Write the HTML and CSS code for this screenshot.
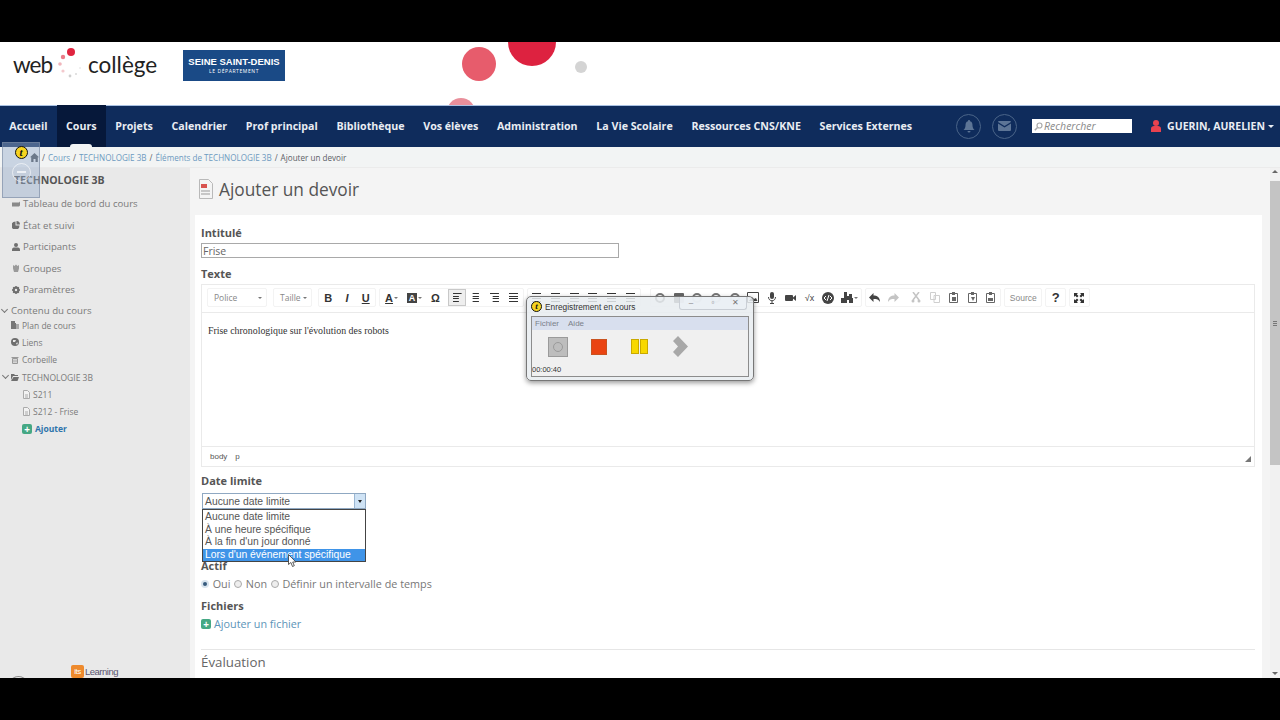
FILE: index.html
```html
<!DOCTYPE html>
<html lang="fr">

<head>
    <meta charset="UTF-8">
    <title>Ajouter un devoir</title>
    <link rel="stylesheet" href="styles.css">
</head>

<body>
    <div class="letterbox"></div>
    <div class="screen">
        <!-- en-tete -->
        <header class="site-header">
            <div class="logo">
                <span class="logo-web">web</span>
                <svg class="logo-dots" width="30" height="34" viewBox="0 0 30 34">
                    <circle cx="16" cy="5" r="4" fill="#e0243f"/>
                    <circle cx="8" cy="10" r="2.2" fill="#ea7b88"/>
                    <circle cx="5" cy="17" r="1.8" fill="#f0b5bb"/>
                    <circle cx="8" cy="24" r="1.6" fill="#f3c9cd"/>
                    <circle cx="15" cy="29" r="1.4" fill="#cfcfcf"/>
                    <circle cx="21" cy="27" r="1" fill="#d8d8d8"/>
                    <circle cx="25" cy="21" r="0.8" fill="#dddddd"/>
                </svg>
                <span>collège</span>
            </div>
            <div class="dept-logo">
                <span class="dept-name">SEINE SAINT-DENIS</span>
                <span class="dept-sub">LE DÉPARTEMENT</span>
            </div>
            <i class="blob blob-a"></i>
            <i class="blob blob-b"></i>
            <i class="blob blob-c"></i>
            <i class="blob blob-d"></i>
        </header>

        <nav class="main-nav">
            <a class="nav-link" href="#">Accueil</a>
            <a class="nav-link active" href="#">Cours</a>
            <a class="nav-link" href="#">Projets</a>
            <a class="nav-link" href="#">Calendrier</a>
            <a class="nav-link" href="#">Prof principal</a>
            <a class="nav-link" href="#">Bibliothèque</a>
            <a class="nav-link" href="#">Vos élèves</a>
            <a class="nav-link" href="#">Administration</a>
            <a class="nav-link" href="#">La Vie Scolaire</a>
            <a class="nav-link" href="#">Ressources CNS/KNE</a>
            <a class="nav-link" href="#">Services Externes</a>
            <div class="nav-right">
                <span class="round-btn">
                    <svg width="12" height="13" viewBox="0 0 12 13"><path fill="#5d7596" d="M6 0a1 1 0 0 1 1 1.2C9 1.7 9.5 3.5 9.5 5.5c0 2.5 1 3.5 2 4.5H.5c1-1 2-2 2-4.5 0-2 .5-3.800 2.500-4.300A1 1 0 0 1 6 0zM4.500 11h3a1.500 1.500 0 0 1-3 0z"/></svg>
                </span>
                <span class="round-btn">
                    <svg width="13" height="10" viewBox="0 0 13 10"><path fill="#5d7596" d="M1 0h11a1 1 0 0 1 1 1L6.500 5 0 1a1 1 0 0 1 1-1zM0 2.500l6.500 4 6.500-4V9a1 1 0 0 1-1 1H1a1 1 0 0 1-1-1z"/></svg>
                </span>
                <div class="search-box">
                    <svg width="9" height="9" viewBox="0 0 9 9"><circle cx="5.500" cy="3.500" r="2.500" fill="none" stroke="#aaa" stroke-width="1.200"/><path d="M3.500 5.500L.8 8.200" stroke="#aaa" stroke-width="1.500"/></svg>
                    <span>Rechercher</span>
                </div>
                <div class="user-menu">
                    <svg width="10" height="12" viewBox="0 0 10 12"><circle cx="5" cy="3" r="3" fill="#e8424f"/><path fill="#e8424f" d="M0 12V8.500C0 7 1.500 6 3 6h4c1.500 0 3 1 3 2.500V12z"/></svg>
                    <span>GUERIN, AURELIEN</span>
                    <i class="caret"></i>
                </div>
            </div>
        </nav>

        <div class="breadcrumb">
            <svg class="home-icon" width="9" height="9" viewBox="0 0 9 9"><path fill="#4a4f55" d="M4.500 0L9 4.300H7.800V9H5.500V6h-2v3H1.200V4.300H0z"/></svg>
            <span class="sep">/</span><a href="#">Cours</a>
            <span class="sep">/</span><a href="#">TECHNOLOGIE 3B</a>
            <span class="sep">/</span><a href="#">Éléments de TECHNOLOGIE 3B</a>
            <span class="sep">/</span><span>Ajouter un devoir</span>
        </div>

        <div class="page">
            <!-- colonne de gauche -->
            <aside class="sidebar">
                <div class="course-title">TECHNOLOGIE 3B</div>
                <ul class="side-main">
                    <li><svg width="8" height="8" viewBox="0 0 8 8"><path fill="#8a8a8a" d="M0 2.500h7l1-1v4l-1 1H0z"/></svg>Tableau de bord du cours</li>
                    <li><svg width="8" height="8" viewBox="0 0 8 8"><path fill="#6f6f6f" d="M3.500.5v4h4a4 4 0 1 1-4-4zM4.500 0A3.500 3.500 0 0 1 8 3.500H4.500z"/></svg>État et suivi</li>
                    <li><svg width="8" height="8" viewBox="0 0 8 8"><circle cx="4" cy="2" r="2" fill="#6f6f6f"/><path fill="#6f6f6f" d="M0 8V6.500C0 5 1.500 4.500 2.500 4.500h3C6.500 4.500 8 5 8 6.500V8z"/></svg>Participants</li>
                    <li><svg width="8" height="8" viewBox="0 0 8 8"><path fill="#9a9a9a" d="M1 1l1.500 1L4 .5 5.500 2 7 1v3.500L6 8H2L1 4.500z"/></svg>Groupes</li>
                    <li><svg width="8" height="8" viewBox="0 0 8 8"><circle cx="4" cy="4" r="2.500" fill="none" stroke="#6f6f6f" stroke-width="1.800"/><path stroke="#6f6f6f" stroke-width="1.400" d="M4 0v8M0 4h8M1.200 1.200l5.600 5.600M6.800 1.200L1.200 6.800"/><circle cx="4" cy="4" r="1.200" fill="#e9e9e9"/></svg>Paramètres</li>
                </ul>
                <div class="side-heading"><i class="chev"></i>Contenu du cours</div>
                <ul class="side-tree">
                    <li><svg width="8" height="8" viewBox="0 0 8 8"><path fill="#777" d="M0 0h4v2h1v6H0z"/><path fill="#aaa" d="M5 3h3v5H5z"/></svg>Plan de cours</li>
                    <li><svg width="8" height="8" viewBox="0 0 8 8"><circle cx="4" cy="4" r="4" fill="#6f6f6f"/><path fill="#e9e9e9" d="M2 2h3L4 4H2zM5 5l2-.5L6 7z"/></svg>Liens</li>
                    <li><svg width="8" height="8" viewBox="0 0 8 8"><path fill="none" stroke="#999" d="M1.500 2.500h5v5h-5zM.5 1.500h7M3 3.500v3M5 3.500v3"/></svg>Corbeille</li>
                    <li class="folder"><i class="chev"></i><svg width="8" height="7" viewBox="0 0 8 7"><path fill="#6f6f6f" d="M0 0h3l1 1h3v1H2L0 6zM2.500 3H8L6.500 7H0z"/></svg>TECHNOLOGIE 3B</li>
                    <li class="nested"><svg width="7" height="9" viewBox="0 0 7 9"><path fill="#f2f2f2" stroke="#aaa" d="M.5.500h4l2 2v6h-6z"/><path stroke="#aaa" d="M2 5h3M2 7h3"/></svg>S211</li>
                    <li class="nested"><svg width="7" height="9" viewBox="0 0 7 9"><path fill="#f2f2f2" stroke="#aaa" d="M.5.500h4l2 2v6h-6z"/><path stroke="#aaa" d="M2 5h3M2 7h3"/></svg>S212 - Frise</li>
                    <li class="nested add"><i class="plus-ico">+</i>Ajouter</li>
                </ul>
                <div class="brand"><span class="brand-mark">its</span><span>Learning</span></div>
                <i class="side-arc"></i>
            </aside>

            <main class="content">
                <div class="page-title">
                    <svg width="16" height="20" viewBox="0 0 16 20"><path fill="#f4f4f4" stroke="#b9b9b9" d="M1.500.5h9l4 4v15h-13z"/><path fill="#d8534f" d="M3 5h6v4H3z"/><path stroke="#999" d="M3 12h9M3 15h9"/></svg>
                    <h1>Ajouter un devoir</h1>
                </div>
                <form class="card">
                    <label class="field-label">Intitulé</label>
                    <input class="text-input" type="text" value="Frise">

                    <label class="field-label label-texte">Texte</label>
                    <div class="editor">
                        <div class="toolbar">
                            <div class="tb-group tb-combo combo-police">Police<i class="mini-caret"></i></div>
                            <div class="tb-group tb-combo combo-taille">Taille<i class="mini-caret"></i></div>
                            <div class="tb-group">
                                <span class="tb-btn"><b>B</b></span>
                                <span class="tb-btn"><b><em>I</em></b></span>
                                <span class="tb-btn"><b class="under">U</b></span>
                            </div>
                            <div class="tb-group">
                                <span class="tb-btn wide"><b class="under">A</b><i class="mini-caret"></i></span>
                                <span class="tb-btn wide"><b class="inverse">A</b><i class="mini-caret"></i></span>
                                <span class="tb-btn"><b>Ω</b></span>
                                <span class="tb-btn on"><i class="lines left"></i></span>
                                <span class="tb-btn"><i class="lines center"></i></span>
                                <span class="tb-btn"><i class="lines right"></i></span>
                                <span class="tb-btn"><i class="lines"></i></span>
                            </div>
                            <div class="tb-group">
                                <span class="tb-btn"><i class="lines"></i></span>
                                <span class="tb-btn"><i class="lines"></i></span>
                                <span class="tb-btn"><i class="lines"></i></span>
                                <span class="tb-btn"><i class="lines"></i></span>
                                <span class="tb-btn"><i class="lines"></i></span>
                                <span class="tb-btn"><i class="lines"></i></span>
                            </div>
                            <div class="tb-group group-media">
                                <span class="tb-btn"><i class="blk round"></i></span>
                                <span class="tb-btn"><i class="blk"></i></span>
                                <span class="tb-btn"><i class="blk round"></i></span>
                                <span class="tb-btn"><i class="blk round"></i></span>
                                <span class="tb-btn"><i class="blk round"></i></span>
                                <span class="tb-btn"><svg width="12" height="11" viewBox="0 0 12 11"><path fill="none" stroke="#444" d="M.5.500h11v10H.5z"/><path fill="#444" d="M2 9l3-4 2 2 2-1 1.500 3z"/></svg></span>
                                <span class="tb-btn"><svg width="8" height="12" viewBox="0 0 8 12"><rect x="2" width="4" height="7" rx="2" fill="#444"/><path fill="none" stroke="#444" d="M.5 5c0 5 7 5 7 0M4 9v3M2 11.500h4"/></svg></span>
                                <span class="tb-btn"><svg width="11" height="8" viewBox="0 0 11 8"><rect y="1" width="8" height="6" rx="1" fill="#444"/><path fill="#444" d="M8 3.500L11 1v6L8 4.500z"/></svg></span>
                                <span class="tb-btn sqrt">√x</span>
                                <span class="tb-btn"><svg width="12" height="12" viewBox="0 0 12 12"><circle cx="6" cy="6" r="6" fill="#444"/><path fill="none" stroke="#fff" d="M4 4L2 6l2 2M8 4l2 2-2 2M7 3L5 9"/></svg></span>
                                <span class="tb-btn wide"><svg width="12" height="11" viewBox="0 0 12 11"><path fill="#444" d="M3 0h3v4h2V2h3v4h1v5H8V8H6v3H0V6h3z"/></svg><i class="mini-caret"></i></span>
                            </div>
                            <div class="tb-group">
                                <span class="tb-btn"><svg width="11" height="9" viewBox="0 0 11 9"><path fill="#444" d="M4.500 0v2.500C8 2.500 11 4 11 9 9.500 6.500 8 6 4.500 6v3L0 4.500z"/></svg></span>
                                <span class="tb-btn"><svg width="11" height="9" viewBox="0 0 11 9"><path fill="#c4c4c4" d="M6.500 0v2.500C3 2.500 0 4 0 9c1.500-2.500 3-3 6.500-3v3L11 4.500z"/></svg></span>
                                <span class="tb-btn after-gap"><svg width="10" height="11" viewBox="0 0 10 11"><path fill="none" stroke="#c4c4c4" stroke-width="1.500" d="M2 0l6 8M8 0L2 8"/><circle cx="2" cy="9" r="1.500" fill="#c4c4c4"/><circle cx="8" cy="9" r="1.500" fill="#c4c4c4"/></svg></span>
                                <span class="tb-btn"><svg width="10" height="11" viewBox="0 0 10 11"><path fill="#fff" stroke="#cfcfcf" d="M.5.500h5v7h-5zM4 3.500h5.500v7H4z"/></svg></span>
                                <span class="tb-btn"><svg width="9" height="11" viewBox="0 0 9 11"><path fill="#fff" stroke="#666" d="M.5 1.500h8v9h-8z"/><path fill="#666" d="M3 0h3v3H3zM3 5h4v4H3z"/></svg></span>
                                <span class="tb-btn"><svg width="9" height="11" viewBox="0 0 9 11"><path fill="#fff" stroke="#666" d="M.5 1.500h8v9h-8z"/><path fill="#666" d="M3 0h3v3H3zM3 5h4l-2 4z"/></svg></span>
                                <span class="tb-btn"><svg width="9" height="11" viewBox="0 0 9 11"><path fill="#fff" stroke="#666" d="M.5 1.500h8v9h-8z"/><path fill="#666" d="M3 0h3v3H3zM2 6h5v3H2z"/></svg></span>
                            </div>
                            <div class="tb-group tb-source">Source</div>
                            <div class="tb-group"><span class="tb-btn"><b class="qmark">?</b></span></div>
                            <div class="tb-group"><span class="tb-btn"><svg width="10" height="10" viewBox="0 0 10 10"><path fill="#333" d="M0 0h4L2.800 1.200 4.500 3 3 4.500 1.200 2.800 0 4zM10 0v4L8.800 2.800 7 4.500 5.500 3l1.700-1.800L6 0zM0 10V6l1.200 1.200L3 5.500 4.500 7 2.800 8.800 4 10zM10 10H6l1.200-1.200L5.500 7 7 5.500l1.800 1.700L10 6z"/></svg></span></div>
                        </div>
                        <div class="editor-body">Frise chronologique sur l'évolution des robots</div>
                        <div class="editor-foot">
                            <span>body</span><span>p</span>
                            <i class="resize"></i>
                        </div>
                    </div>

                    <label class="field-label label-date">Date limite</label>
                    <div class="fake-select">
                        <span>Aucune date limite</span>
                        <i class="select-arrow"></i>
                        <ul class="select-list">
                            <li>Aucune date limite</li>
                            <li>À une heure spécifique</li>
                            <li>À la fin d'un jour donné</li>
                            <li class="selected">Lors d'un événement spécifique</li>
                        </ul>
                        <svg class="mouse" width="9" height="13" viewBox="0 0 9 13"><path fill="#fff" stroke="#333" stroke-width=".8" d="M.5.500v10l2.400-2 1.600 4 1.800-.8-1.600-3.700h3.200z"/></svg>
                    </div>

                    <label class="field-label label-actif">Actif</label>
                    <div class="radios">
                        <i class="radio checked"></i><span>Oui</span>
                        <i class="radio"></i><span>Non</span>
                        <i class="radio"></i><span>Définir un intervalle de temps</span>
                    </div>

                    <label class="field-label label-files">Fichiers</label>
                    <a class="add-file" href="#"><i class="plus-ico">+</i>Ajouter un fichier</a>

                    <h2 class="section-title">Évaluation</h2>
                </form>
            </main>

            <div class="scrollbar">
                <i class="arrow-up"></i>
                <div class="thumb"></div>
                <i class="arrow-down"></i>
            </div>
        </div>

        <!-- fenetre de l'enregistreur, par dessus la page -->
        <div class="recorder">
            <div class="rec-title">
                <span class="t-badge">t</span>
                <span>Enregistrement en cours</span>
                <div class="rec-controls"><i>–</i><i>▫</i><i>✕</i></div>
            </div>
            <div class="rec-inner">
                <div class="rec-menu"><span>Fichier</span><span>Aide</span></div>
                <div class="rec-buttons">
                    <span class="rec-btn rec-dot"><i></i></span>
                    <span class="rec-btn rec-stop"></span>
                    <span class="rec-btn rec-pause"><i></i><i></i></span>
                    <span class="rec-btn rec-next"><svg width="15" height="21" viewBox="0 0 15 21"><path fill="#a8a8a8" d="M5 0l10 10.500L5 21l-5-5 5-5.500L0 5z"/></svg></span>
                </div>
                <div class="rec-time">00:00:40</div>
            </div>
        </div>

        <!-- widget replie en haut a gauche -->
        <div class="mini-widget">
            <span class="t-badge">t</span>
            <i class="mini-minus"></i>
        </div>
    </div>
    <div class="letterbox"></div>
</body>

</html>
```

FILE: styles.css
```css
* {
    padding: 0;
    margin: 0;
    box-sizing: border-box;
}

html,
body {
    height: 720px;
    overflow: hidden;
}

body {
    display: flex;
    flex-direction: column;
    font-family: "Open Sans", "Liberation Sans", sans-serif;
    color: #555;
    background: #000;
}

ul {
    list-style: none;
}

a {
    text-decoration: none;
    color: inherit;
}

i {
    font-style: normal;
}

.letterbox {
    height: 42px;
    flex: none;
    background: #000;
}

.screen {
    position: relative;
    height: 636px;
    flex: none;
    display: flex;
    flex-direction: column;
    overflow: hidden;
    background: #f4f4f4;
}

/* en-tete */
.site-header {
    position: relative;
    height: 63px;
    flex: none;
    display: flex;
    align-items: center;
    padding: 0 0 17px 13px;
    overflow: hidden;
    background: #fff;
}

.logo {
    display: flex;
    align-items: center;
    width: 170px;
    margin-bottom: 2px;
    font-family: "Lato", sans-serif;
    font-size: 22.5px;
    font-weight: 400;
    color: #222;
}

.logo-web {
    letter-spacing: -1px;
}

.logo-dots {
    margin: 0 3px 0 3px;
}

.dept-logo {
    display: flex;
    flex-direction: column;
    align-items: center;
    justify-content: center;
    width: 102px;
    height: 31px;
    color: #fff;
    background: #1a4a86;
}

.dept-name {
    font-family: "Liberation Sans", sans-serif;
    font-size: 9.5px;
    font-weight: 700;
    line-height: 13px;
}

.dept-sub {
    font-size: 5px;
    line-height: 7px;
    letter-spacing: .6px;
}

.blob {
    position: absolute;
    border-radius: 50%;
}

.blob-a {
    left: 462px;
    top: 5px;
    width: 34px;
    height: 34px;
    background: #e75c6c;
}

.blob-b {
    left: 508px;
    top: -24px;
    width: 48px;
    height: 48px;
    background: #dd2240;
}

.blob-c {
    left: 575px;
    top: 19px;
    width: 12px;
    height: 12px;
    background: #d4d4d4;
}

.blob-d {
    left: 447px;
    top: 56px;
    width: 28px;
    height: 28px;
    background: #e98f9b;
}

/* menu principal */
.main-nav {
    height: 42px;
    flex: none;
    display: flex;
    align-items: stretch;
    background: #0f2c5c;
    box-shadow: inset 0 1px 0 #a9c1e2;
}

.nav-link {
    display: flex;
    align-items: center;
    padding: 0 9.35px;
    font-size: 10.65px;
    font-weight: 700;
    color: #e9edf3;
}

.nav-link.active {
    position: relative;
    background: #06183a;
}

.nav-link.active::after {
    content: "";
    position: absolute;
    left: 13px;
    bottom: 0;
    width: 22px;
    height: 3px;
    border-radius: 3px 3px 0 0;
    background: #f2f4f4;
}

.nav-right {
    display: flex;
    align-items: center;
    margin-left: auto;
}

.round-btn {
    display: flex;
    align-items: center;
    justify-content: center;
    width: 25px;
    height: 25px;
    margin-right: 11px;
    border: 1px solid #4a6488;
    border-radius: 50%;
}

.search-box {
    display: flex;
    align-items: center;
    gap: 1px;
    width: 100px;
    height: 14px;
    margin: 0 19px 0 4px;
    padding-left: 2px;
    font-size: 10.5px;
    font-style: italic;
    color: #8a8a8a;
    background: #fff;
}

.user-menu {
    display: flex;
    align-items: center;
    gap: 6px;
    padding-right: 6px;
    font-size: 10.5px;
    font-weight: 700;
    color: #e9edf3;
}

.caret {
    width: 0;
    height: 0;
    margin-left: -3px;
    border: 3px solid transparent;
    border-top: 3px solid #e9edf3;
    border-bottom: 0;
}

/* fil d'ariane */
.breadcrumb {
    height: 21px;
    flex: none;
    display: flex;
    align-items: center;
    gap: 3px;
    padding-left: 30px;
    font-size: 8.1px;
    color: #5b6066;
    background: #f2f4f4;
    border-bottom: 1px solid #ebebeb;
}

.breadcrumb a {
    color: #6d9ac0;
}

/* mise en page */
.page {
    flex: 1;
    min-height: 0;
    display: flex;
}

.sidebar {
    position: relative;
    width: 190px;
    flex: none;
    padding-top: 5px;
    overflow: hidden;
    background: #e9e9e9;
    font-size: 10px;
    color: #7a7a7a;
}

.course-title {
    height: 15px;
    padding-left: 14px;
    font-size: 10.5px;
    font-weight: 700;
    line-height: 15px;
    color: #555;
}

.side-main {
    margin-top: 5px;
}

.side-main li {
    display: flex;
    align-items: center;
    gap: 3px;
    height: 21.5px;
    padding-left: 12px;
    font-size: 9.6px;
}

.side-heading {
    display: flex;
    align-items: center;
    gap: 4px;
    height: 12px;
    margin-top: 4px;
    padding-left: 1px;
    font-size: 9.7px;
}

.chev {
    width: 5px;
    height: 5px;
    margin: -3px 0 0 1px;
    border-right: 1px solid #777;
    border-bottom: 1px solid #777;
    transform: rotate(45deg);
}

.side-tree li {
    display: flex;
    align-items: center;
    gap: 3px;
    height: 17.3px;
    padding-left: 11px;
    font-size: 8.5px;
}

.side-tree li.folder {
    padding-left: 2px;
}

.side-tree li.nested {
    padding-left: 23px;
}

.side-tree li.add {
    padding-left: 22px;
    font-weight: 700;
    color: #2d74ab;
}

.plus-ico {
    display: inline-flex;
    align-items: center;
    justify-content: center;
    width: 10px;
    height: 10px;
    border-radius: 2px;
    font-size: 10px;
    font-weight: 700;
    line-height: 10px;
    color: #fff;
    background: #45a884;
}

.brand {
    position: absolute;
    left: 71px;
    bottom: 0;
    display: flex;
    align-items: center;
    gap: 1px;
    height: 13px;
    font-family: "Liberation Sans Narrow", "Liberation Sans", sans-serif;
    font-size: 9.5px;
    letter-spacing: -.5px;
    color: #5a5570;
}

.brand-mark {
    width: 13px;
    height: 13px;
    border-radius: 2px;
    font-size: 8px;
    line-height: 13px;
    text-align: center;
    color: #fff;
    background: #ee8a2d;
}

.side-arc {
    position: absolute;
    left: 8px;
    bottom: -20px;
    width: 21px;
    height: 22px;
    border: 1px solid #8a8a8a;
    border-radius: 50%;
}

.content {
    flex: 1;
    min-width: 0;
    padding-left: 5px;
}

.page-title {
    height: 47px;
    display: flex;
    align-items: center;
    gap: 5px;
    padding: 0 0 5px 3px;
}

.page-title h1 {
    font-size: 17.3px;
    font-weight: 400;
    color: #555;
}

.card {
    display: flex;
    flex-direction: column;
    align-items: flex-start;
    width: 1067px;
    height: 463px;
    padding: 11px 7px 0 6px;
    overflow: hidden;
    background: #fff;
}

.field-label {
    height: 14px;
    font-size: 11px;
    font-weight: 700;
    line-height: 14px;
    color: #555;
}

.text-input {
    width: 418px;
    height: 15px;
    margin-top: 3px;
    padding-left: 1px;
    border: 1px solid #a9a9a9;
    font-family: inherit;
    font-size: 10.5px;
    color: #666;
}

.label-texte {
    margin-top: 9px;
}

.editor {
    width: 1054px;
    height: 183px;
    margin-top: 3px;
    display: flex;
    flex-direction: column;
    border: 1px solid #eaeaea;
}

.toolbar {
    height: 28px;
    flex: none;
    display: flex;
    align-items: center;
    gap: 3px;
    padding: 0 0 2px 5px;
    border-bottom: 1px solid #eaeaea;
}

.tb-group {
    height: 19px;
    display: flex;
    align-items: center;
    border: 1px solid #f3f3f3;
    border-radius: 2px;
    font-size: 8.5px;
    color: #888;
}

.tb-combo {
    justify-content: space-between;
    margin-right: 3px;
    padding: 0 4px 0 6px;
}

.combo-police {
    width: 60px;
}

.combo-taille {
    width: 39px;
}

.mini-caret {
    width: 0;
    height: 0;
    border: 2px solid transparent;
    border-top: 2px solid #777;
    border-bottom: 0;
}

.tb-btn {
    display: flex;
    align-items: center;
    justify-content: center;
    gap: 1px;
    width: 18.7px;
    height: 17px;
    font-family: "Liberation Sans", sans-serif;
    font-size: 11px;
    color: #333;
}

.tb-btn.wide {
    width: 23px;
}

.tb-btn.on {
    margin-left: 3px;
    border: 1px solid #c8c8c8;
    background: #eee;
}

.tb-btn.after-gap {
    margin-left: 4px;
}

.tb-btn.sqrt {
    font-size: 9px;
    color: #444;
}

.under {
    text-decoration: underline;
}

.inverse {
    padding: 0 2px;
    font-size: 9px;
    color: #fff;
    background: #444;
}

.qmark {
    font-size: 13px;
}

.lines {
    width: 9px;
    height: 9px;
    background: repeating-linear-gradient(#333 0 1px, transparent 1px 2.6px);
}

.lines.left {
    clip-path: polygon(0 0, 100% 0, 100% 30%, 70% 30%, 70% 100%, 0 100%);
}

.lines.right {
    clip-path: polygon(0 0, 100% 0, 100% 100%, 30% 100%, 30% 30%, 0 30%);
}

.lines.center {
    clip-path: polygon(15% 0, 85% 0, 85% 100%, 15% 100%);
}

.blk {
    width: 10px;
    height: 10px;
    border-radius: 1px;
    background: #666;
}

.blk.round {
    border-radius: 50%;
    background: none;
    border: 2px solid #777;
}

.group-media {
    margin-left: 6px;
}

.tb-source {
    width: 38px;
    justify-content: center;
    font-family: "Liberation Sans", sans-serif;
}

.editor-body {
    flex: 1;
    padding: 11px 6px;
    font-family: "Liberation Serif", serif;
    font-size: 9.9px;
    line-height: 14px;
    color: #333;
}

.editor-foot {
    position: relative;
    height: 20px;
    flex: none;
    display: flex;
    align-items: center;
    gap: 8px;
    padding-left: 8px;
    border-top: 1px solid #eaeaea;
    font-family: "Liberation Sans", sans-serif;
    font-size: 8px;
    color: #555;
}

.resize {
    position: absolute;
    right: 3px;
    bottom: 4px;
    border: 3px solid transparent;
    border-right-color: #777;
    border-bottom-color: #777;
}

.label-date {
    margin-top: 7px;
}

.fake-select {
    position: relative;
    width: 164px;
    height: 16px;
    margin: 5px 0 0 1px;
    display: flex;
    align-items: center;
    padding-left: 2px;
    border: 1px solid #8fa8c2;
    font-family: "Liberation Sans", sans-serif;
    font-size: 10.35px;
    color: #555;
}

.select-arrow {
    position: absolute;
    right: 0;
    top: 0;
    width: 11px;
    height: 14px;
    background: #cfe3f5;
    border-left: 1px solid #9bb7d3;
}

.select-arrow::after {
    content: "";
    position: absolute;
    left: 3px;
    top: 6px;
    border: 2px solid transparent;
    border-top: 3px solid #222;
    border-bottom: 0;
}

.select-list {
    position: absolute;
    left: -1px;
    top: 15px;
    z-index: 5;
    width: 164px;
    height: 53px;
    padding-top: 1px;
    border: 1px solid #444;
    background: #fff;
}

.select-list li {
    height: 12.6px;
    padding-left: 2px;
    line-height: 12.6px;
    white-space: nowrap;
}

.select-list li.selected {
    color: #fff;
    background: #3f94e8;
}

.mouse {
    position: absolute;
    left: 85px;
    top: 60px;
    z-index: 6;
}

.label-actif {
    margin-top: 50px;
}

.radios {
    display: flex;
    align-items: center;
    gap: 3.7px;
    margin-top: 3px;
    font-size: 10.8px;
    color: #777;
}

.radio {
    width: 8px;
    height: 8px;
    border: 1px solid #aaa;
    border-radius: 50%;
    background: #eee;
}

.radio.checked {
    border: 2px solid #d8e4ee;
    background: #355a7d;
}

.label-files {
    margin-top: 8px;
}

.add-file {
    display: flex;
    align-items: center;
    gap: 3px;
    margin-top: 3px;
    font-size: 10.8px;
    color: #5b94b8;
}

.section-title {
    width: 1054px;
    margin-top: 18px;
    padding-top: 3px;
    border-top: 1px solid #e6e6e6;
    font-size: 13.3px;
    font-weight: 400;
    color: #666;
}

.scrollbar {
    width: 10px;
    margin-left: auto;
    flex: none;
    display: flex;
    flex-direction: column;
    align-items: center;
    padding-top: 1px;
    background: #f1f1f1;
}

.arrow-up,
.arrow-down {
    flex: none;
    border: 3px solid transparent;
}

.arrow-up {
    border-bottom-color: #666;
    border-top: 0;
    margin-top: 1px;
}

.arrow-down {
    margin-top: auto;
    margin-bottom: 3px;
    border-top-color: #666;
    border-bottom: 0;
}

.thumb {
    width: 10px;
    height: 284px;
    margin-top: 8px;
    display: flex;
    align-items: center;
    justify-content: center;
    background: #c4c4c4;
}

.thumb::after {
    content: "";
    width: 4px;
    height: 5px;
    background: repeating-linear-gradient(#777 0 1px, transparent 1px 2px);
}

/* enregistreur */
.recorder {
    position: absolute;
    left: 526px;
    top: 254px;
    width: 228px;
    height: 85px;
    padding: 0 4px 4px;
    display: flex;
    flex-direction: column;
    border: 1px solid #777;
    border-radius: 5px;
    background: rgba(232, 236, 240, .85);
    box-shadow: 0 2px 5px rgba(0, 0, 0, .4);
    z-index: 8;
}

.rec-title {
    height: 19px;
    flex: none;
    display: flex;
    align-items: center;
    gap: 3px;
    font-family: "Liberation Sans", sans-serif;
    font-size: 8.3px;
    color: #333;
}

.t-badge {
    display: inline-block;
    width: 11px;
    height: 11px;
    border: 1px solid #111;
    border-radius: 50%;
    font-family: "Liberation Serif", serif;
    font-size: 9px;
    font-style: italic;
    font-weight: 700;
    line-height: 9px;
    text-align: center;
    color: #111;
    background: #f6d31f;
}

.rec-controls {
    position: absolute;
    top: 0;
    right: 6px;
    width: 68px;
    height: 13px;
    display: flex;
    border: 1px solid #c9ced5;
    border-top: 0;
    border-radius: 0 0 3px 3px;
    background: rgba(235, 240, 245, .8);
}

.rec-controls i {
    flex: 1;
    font-size: 8px;
    line-height: 12px;
    text-align: center;
    color: #777;
}

.rec-inner {
    flex: 1;
    display: flex;
    flex-direction: column;
    border: 1px solid #8c8c8c;
    background: #f0f0f0;
}

.rec-menu {
    height: 13px;
    flex: none;
    display: flex;
    gap: 9px;
    padding-left: 3px;
    font-family: "Liberation Sans", sans-serif;
    font-size: 8px;
    line-height: 13px;
    color: #7a7f8a;
    background: #d8dfee;
}

.rec-buttons {
    height: 33px;
    flex: none;
    display: flex;
    align-items: center;
}

.rec-btn {
    display: flex;
    align-items: center;
    justify-content: center;
    flex: none;
}

.rec-dot {
    width: 20px;
    height: 20px;
    margin-left: 16px;
    border: 1px solid #9a9a9a;
    background: #bdbdbd;
}

.rec-dot i {
    width: 10px;
    height: 10px;
    border: 1px solid #9a9a9a;
    border-radius: 50%;
}

.rec-stop {
    width: 16px;
    height: 16px;
    margin-left: 23px;
    border: 1px solid #c9521f;
    background: #ea4412;
}

.rec-pause {
    gap: 1px;
    margin-left: 24px;
}

.rec-pause i {
    width: 8px;
    height: 15px;
    border: 1px solid #c9a900;
    background: #f8d800;
}

.rec-next {
    margin-left: 25px;
}

.rec-time {
    font-family: "Liberation Sans", sans-serif;
    font-size: 7.5px;
    line-height: 13px;
    color: #333;
}

/* petit widget replie */
.mini-widget {
    position: absolute;
    left: 2px;
    top: 100px;
    width: 38px;
    height: 56px;
    display: flex;
    flex-direction: column;
    align-items: center;
    gap: 4px;
    padding-top: 3px;
    border: 1px solid rgba(120, 135, 160, .6);
    background: rgba(150, 172, 205, .45);
    z-index: 8;
}

.mini-widget .t-badge {
    width: 13px;
    height: 13px;
    font-size: 11px;
    line-height: 11px;
}

.mini-minus {
    position: relative;
    width: 19px;
    height: 19px;
    border: 1px solid rgba(255, 255, 255, .6);
    border-radius: 50%;
}

.mini-minus::after {
    content: "";
    position: absolute;
    left: 4px;
    top: 7px;
    width: 9px;
    height: 2px;
    background: rgba(255, 255, 255, .7);
}
```
